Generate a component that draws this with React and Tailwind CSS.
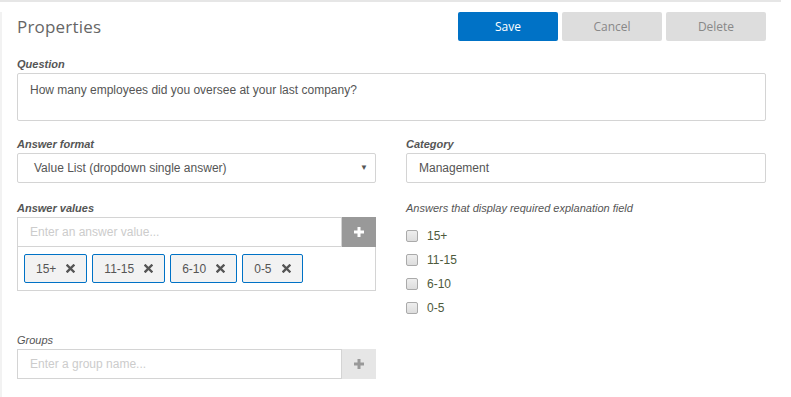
import React from 'react';

const Label = ({ children, bold = true }) => (
  <div className={`text-[11px] leading-[13px] italic text-[#555] mb-[2px] ${bold ? 'font-bold' : ''}`}>{children}</div>
);

const PlusIcon = ({ color }) => (
  <svg width="10" height="10" viewBox="0 0 10 10">
    <rect x="3.5" y="0" width="3" height="10" fill={color} />
    <rect x="0" y="3.5" width="10" height="3" fill={color} />
  </svg>
);

const XIcon = () => (
  <svg width="9" height="9" viewBox="0 0 9 9">
    <path d="M1.5 1.5 L7.5 7.5 M7.5 1.5 L1.5 7.5" stroke="#555" strokeWidth="2.4" strokeLinecap="square" />
  </svg>
);

const Tag = ({ text }) => (
  <div className="h-[29px] flex items-center gap-[10px] px-[11px] bg-[#f2f2f2] border border-[#0072c6] rounded-[2px] text-[12px] text-[#555]">
    <span>{text}</span>
    <XIcon />
  </div>
);

const Check = ({ text }) => (
  <div className="flex items-center gap-[9px] h-[13px]">
    <div className="w-[12px] h-[12px] rounded-[2px] border border-[#aaa] bg-gradient-to-b from-[#eee] to-[#ddd]" />
    <span className="text-[12px] text-[#4e5a3c]">{text}</span>
  </div>
);

const App = () => {
  const answers = ['15+', '11-15', '6-10', '0-5'];

  return (
    <div className="w-[791px] h-[397px] bg-white overflow-hidden font-['Liberation_Sans',Arial,sans-serif]">
      <div className="mr-[10px] h-[2px] bg-[#e6e6e6]" />
      <div className="mt-[10px] h-full border-l-2 border-[#f2f2f2] pl-[15px] pr-[25px]">
        {/* Header */}
        <div className="flex items-center justify-between h-[29px]">
          <h1 className="text-[17px] text-[#666] font-['Open_Sans',sans-serif] tracking-[0.2px]">Properties</h1>
          <div className="flex gap-[4px] text-[12px] font-['Open_Sans',sans-serif]">
            <button className="w-[100px] h-[29px] bg-[#0072c6] text-white rounded-[2px]">Save</button>
            <button className="w-[100px] h-[29px] bg-[#ddd] text-[#888] rounded-[2px]">Cancel</button>
            <button className="w-[100px] h-[29px] bg-[#ddd] text-[#888] rounded-[2px]">Delete</button>
          </div>
        </div>

        {/* Question */}
        <div className="mt-[17px]">
          <Label>Question</Label>
          <div className="h-[48px] border border-[#d4d4d4] rounded-[2px] px-[12px] pt-[7px] text-[12px] text-[#555]">
            How many employees did you oversee at your last company?
          </div>
        </div>

        <div className="mt-[17px] flex gap-[30px]">
          {/* Left column */}
          <div className="w-[359px]">
            <Label>Answer format</Label>
            <div className="h-[30px] border border-[#d4d4d4] rounded-[2px] flex items-center justify-between pl-[16px] pr-[7px] text-[12px] text-[#555]">
              <span>Value List (dropdown single answer)</span>
              <span className="text-[8px] text-[#555]">▼</span>
            </div>

            <div className="mt-[19px]">
              <Label>Answer values</Label>
              <div className="flex h-[30px]">
                <div className="flex-1 border border-[#d4d4d4] flex items-center pl-[12px] text-[12px] text-[#ccc]">
                  Enter an answer value...
                </div>
                <div className="w-[34px] bg-[#999] flex items-center justify-center">
                  <PlusIcon color="#fff" />
                </div>
              </div>
              <div className="border border-t-0 border-[#d4d4d4] flex gap-[5px] px-[6px] py-[7px]">
                {answers.map((a) => (
                  <Tag key={a} text={a} />
                ))}
              </div>
            </div>

            <div className="mt-[43px]">
              <Label bold={false}>Groups</Label>
              <div className="flex h-[30px]">
                <div className="flex-1 border border-[#d4d4d4] flex items-center pl-[12px] text-[12px] text-[#ccc]">
                  Enter a group name...
                </div>
                <div className="w-[34px] bg-[#e6e6e6] flex items-center justify-center">
                  <PlusIcon color="#999" />
                </div>
              </div>
            </div>
          </div>

          {/* Right column */}
          <div className="w-[360px]">
            <Label>Category</Label>
            <div className="h-[30px] border border-[#d4d4d4] rounded-[2px] flex items-center pl-[12px] text-[12px] text-[#555]">
              Management
            </div>

            <div className="mt-[19px]">
              <div className="text-[11px] leading-[13px] italic text-[#555]">Answers that display required explanation field</div>
              <div className="mt-[14px] flex flex-col gap-[11px]">
                {answers.map((a) => (
                  <Check key={a} text={a} />
                ))}
              </div>
            </div>
          </div>
        </div>
      </div>
    </div>
  );
};

export default App;
